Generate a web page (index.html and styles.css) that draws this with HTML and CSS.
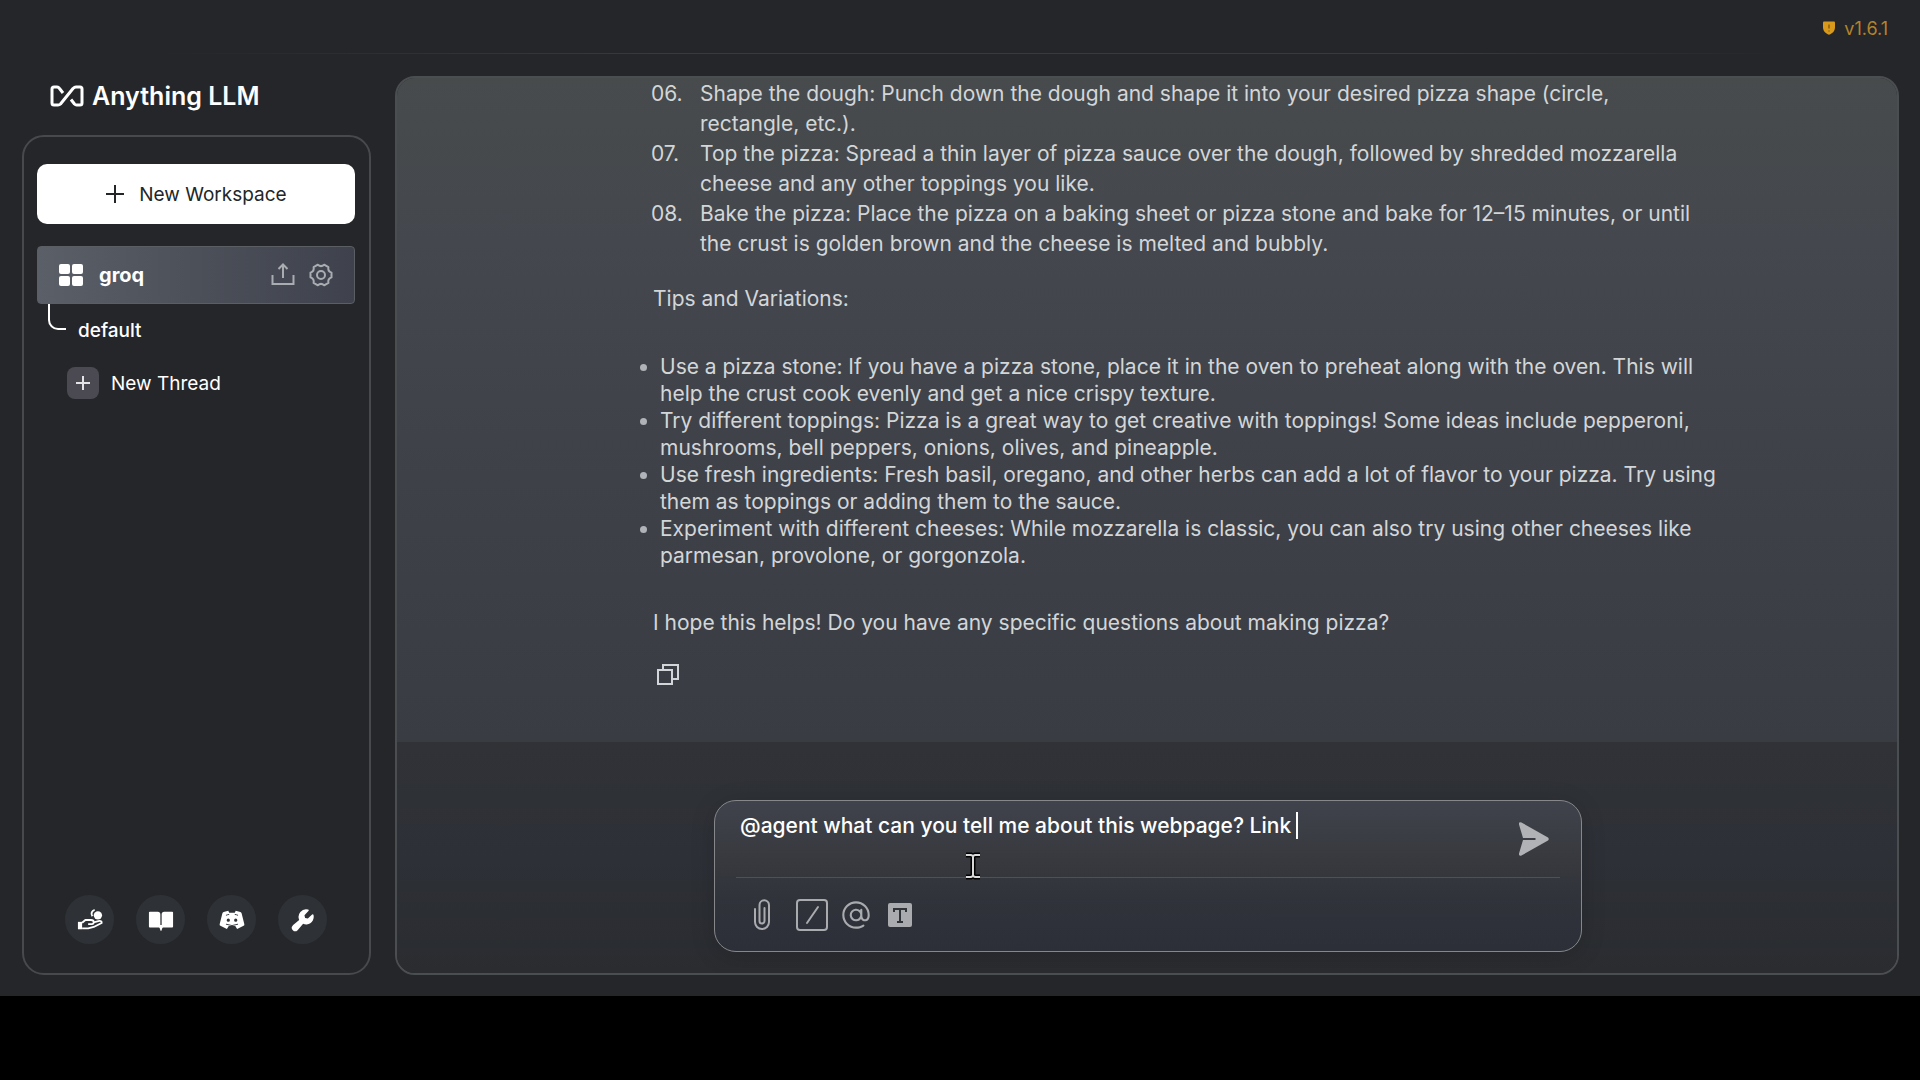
FILE: index.html
```html
<!DOCTYPE html>
<html lang="en">

<head>
    <meta charset="UTF-8">
    <meta name="viewport" content="width=device-width, initial-scale=1.0">
    <title>AnythingLLM</title>
    <link rel="stylesheet" href="styles.css">
</head>

<body>
    <div class="app">
        <header class="topbar">
            <a class="version" href="#">
                <svg class="version-icon" viewBox="0 0 14 14">
                    <path d="M1 1.500Q1 .5 2 .5H12Q13 .5 13 1.500V6C13 10 10.500 12.500 7 13.700C3.500 12.500 1 10 1 6Z" fill="#d99a1c" />
                    <path d="M7 3.500V7.500M7 9.500V10.500" stroke="#8a5c10" stroke-width="1.500" />
                </svg>
                v1.6.1
            </a>
        </header>

        <div class="layout">
            <aside class="sidebar">
                <a class="logo" href="#">
                    <svg class="logo-icon" viewBox="0 0 34 22" fill="none" stroke="#fff" stroke-width="3" stroke-linejoin="round">
                        <path d="M13 8L9.500 3.500Q8.500 2 7 2H4Q2 2 2 4V18Q2 20 4 20H8Q9.500 20 10.500 19L23 3.500Q24.500 2 26 2H30Q32 2 32 4V18Q32 20 30 20H26.500Q25.500 20 24.500 19L21 14.500" />
                    </svg>
                    Anything LLM
                </a>

                <div class="sidebar-panel">
                    <button class="new-workspace" type="button">
                        <svg class="icon-20" viewBox="0 0 20 20" stroke="#222628" stroke-width="2">
                            <path d="M10 1V19M1 10H19" />
                        </svg>
                        New Workspace
                    </button>

                    <div class="workspace">
                        <a class="workspace-name" href="#">
                            <svg class="icon-24" viewBox="0 0 24 24" fill="#fff">
                                <rect x="0" y="1" width="11" height="10" rx="2" />
                                <rect x="13" y="1" width="11" height="10" rx="2" />
                                <rect x="0" y="13" width="11" height="10" rx="2" />
                                <rect x="13" y="13" width="11" height="10" rx="2" />
                            </svg>
                            groq
                        </a>
                        <button class="icon-button" type="button" aria-label="Upload">
                            <svg class="icon-24" viewBox="0 0 24 24" fill="none" stroke="#a9acb1" stroke-width="2">
                                <path d="M1.500 12V21H22.500V12M12 15V2M7.500 6L12 1.500L16.500 6" />
                            </svg>
                        </button>
                        <button class="icon-button" type="button" aria-label="Settings">
                            <svg class="icon-24" viewBox="-12 -12 24 24" fill="none" stroke="#a9acb1" stroke-width="2" stroke-linejoin="round">
                                <path d="M10.500 2.400Q6.500 3.800 7.400 7.900L3.150 10.300Q0 7.500 -3.150 10.300L-7.400 7.900Q-6.500 3.800 -10.500 2.400V-2.400Q-6.500 -3.800 -7.400 -7.900L-3.150 -10.300Q0 -7.500 3.150 -10.300L7.400 -7.900Q6.500 -3.800 10.500 -2.400Z" />
                                <circle r="4" />
                            </svg>
                        </button>
                    </div>

                    <a class="thread" href="#">
                        <span class="thread-line"></span>
                        default
                    </a>
                    <button class="new-thread" type="button">
                        <span class="new-thread-icon">
                            <svg viewBox="0 0 16 16" stroke="#e4e4e6" stroke-width="2">
                                <path d="M8 1V15M1 8H15" />
                            </svg>
                        </span>
                        New Thread
                    </button>

                    <nav class="sidebar-footer">
                        <a class="round-link" href="#" aria-label="Support">
                            <svg viewBox="0 0 28 24">
                                <circle cx="22.500" cy="7" r="4.500" fill="#fff" />
                                <path d="M19 1A4.500 4.500 0 0 0 16.500 8" fill="none" stroke="#fff" stroke-width="2" />
                                <path d="M1 14H5.500V22H1Z" fill="#fff" />
                                <path d="M5.500 15L9 12H15Q18 12 18 14.500L24 13Q27 12.800 26.500 15.200L18 19.500L12 21H5.500M12 16.500H16Q18 16.500 18 14.500" fill="none" stroke="#fff" stroke-width="2" stroke-linejoin="round" />
                            </svg>
                        </a>
                        <a class="round-link" href="#" aria-label="Docs">
                            <svg viewBox="0 0 28 24" fill="#fff">
                                <path d="M2 3H10.500Q13.300 3 13.300 6V17.500H14.700V6Q14.700 3 17.500 3H26Q27 3 27 4V19Q27 20 26 20H16Q15.200 20.500 14.500 23.500H13.500Q12.800 20.500 12 20H2Q1 20 1 19V4Q1 3 2 3Z" />
                            </svg>
                        </a>
                        <a class="round-link" href="#" aria-label="Discord">
                            <svg viewBox="0 0 28 24" fill="#fff">
                                <path fill-rule="evenodd" d="M10 2L11 4.200H17L18 2L23 3.500Q24 4 24.400 5L27.300 16.500Q27.500 17.700 26.500 18.300L19.500 21.800L17.500 18.500H10.500L8.500 21.800L1.500 18.300Q.5 17.700 .7 16.500L3.600 5Q4 4 5 3.500ZM10 10.500A1.700 1.700 0 1 0 10 14A1.700 1.700 0 1 0 10 10.500ZM18 10.500A1.700 1.700 0 1 0 18 14A1.700 1.700 0 1 0 18 10.500Z" />
                                <path d="M7.500 7Q9 6.200 11 6M20.500 7Q19 6.200 17 6M7.500 16.500Q14 19.500 20.500 16.500" stroke="#2e3236" stroke-width="1" fill="none" />
                            </svg>
                        </a>
                        <a class="round-link" href="#" aria-label="Settings">
                            <svg viewBox="16 12 228 228" fill="#fff">
                                <path d="M232,96a72,72,0,0,1-100.940,66L79,222.220c-.12.14-.26.29-.39.42a32,32,0,0,1-45.260-45.260c.14-.13.28-.27.43-.39L94,124.940a72.070,72.070,0,0,1,83.540-98.780,8,8,0,0,1,3.930,13.190L144,80l5.660,26.350L176,112l40.650-37.520a8,8,0,0,1,13.190,3.930A72.600,72.600,0,0,1,232,96Z" />
                            </svg>
                        </a>
                    </nav>
                </div>
            </aside>

            <main class="chat">
                <div class="history">
                    <div class="message">
                        <ol class="steps">
                            <li><span class="step-number">06.</span><span>Shape the dough: Punch down the dough and shape it into your desired pizza shape (circle,<br>rectangle, etc.).</span></li>
                            <li><span class="step-number">07.</span><span>Top the pizza: Spread a thin layer of pizza sauce over the dough, followed by shredded mozzarella<br>cheese and any other toppings you like.</span></li>
                            <li><span class="step-number">08.</span><span>Bake the pizza: Place the pizza on a baking sheet or pizza stone and bake for 12–15 minutes, or until<br>the crust is golden brown and the cheese is melted and bubbly.</span></li>
                        </ol>
                        <p>Tips and Variations:</p>
                        <ul class="tips">
                            <li>Use a pizza stone: If you have a pizza stone, place it in the oven to preheat along with the oven. This will<br>help the crust cook evenly and get a nice crispy texture.</li>
                            <li>Try different toppings: Pizza is a great way to get creative with toppings! Some ideas include pepperoni,<br>mushrooms, bell peppers, onions, olives, and pineapple.</li>
                            <li>Use fresh ingredients: Fresh basil, oregano, and other herbs can add a lot of flavor to your pizza. Try using<br>them as toppings or adding them to the sauce.</li>
                            <li>Experiment with different cheeses: While mozzarella is classic, you can also try using other cheeses like<br>parmesan, provolone, or gorgonzola.</li>
                        </ul>
                        <p>I hope this helps! Do you have any specific questions about making pizza?</p>
                        <button class="copy" type="button" aria-label="Copy">
                            <svg viewBox="0 0 22 22" fill="none" stroke="#d3d6d8" stroke-width="2">
                                <path d="M1 6H15V20H1ZM6 6V1H21V15H15" />
                            </svg>
                        </button>
                    </div>
                </div>

                <div class="prompt-area">
                    <form class="prompt">
                        <div class="prompt-row">
                            <textarea class="prompt-input" rows="1" aria-label="Message">@agent what can you tell me about this webpage? Link</textarea>
                            <span class="caret"></span>
                            <svg class="pointer" viewBox="0 0 18 28" fill="none">
                                <path d="M2 3H7L9 4L11 3H16M9 4V24M2 25H7L9 24L11 25H16" stroke="#000" stroke-width="5" />
                                <path d="M2 3H7L9 4L11 3H16M9 4V24M2 25H7L9 24L11 25H16" stroke="#d8d8d8" stroke-width="2" />
                            </svg>
                            <button class="send" type="submit" aria-label="Send">
                                <svg viewBox="0 0 32 36" fill="#b0b2b5">
                                    <path d="M5 17H17.500V19H5L1 32.500Q.5 35.500 3.500 34.500L30 19.500Q31.500 18 30 16.500L3.500 1.500Q.5 .5 1 3.500Z" />
                                </svg>
                            </button>
                        </div>
                        <div class="prompt-tools">
                            <button class="tool" type="button" aria-label="Attach file">
                                <svg class="clip" viewBox="0 0 16 32" fill="none" stroke="#a9abae" stroke-width="2" stroke-linecap="round">
                                    <path d="M1 10V23A7 7 0 0 0 15 23V6A4.500 4.500 0 0 0 5.500 6V22A2.500 2.500 0 0 0 10.500 22V9" />
                                </svg>
                            </button>
                            <button class="tool" type="button" aria-label="Commands">
                                <svg class="slash" viewBox="0 0 32 32" fill="none" stroke="#a9abae" stroke-width="2">
                                    <rect x="1" y="1" width="30" height="30" rx="3" />
                                    <path d="M11 24L22 8" stroke-linecap="round" />
                                </svg>
                            </button>
                            <button class="tool" type="button" aria-label="Agents">
                                <svg class="at" viewBox="22 22 212 212" fill="#a9abae">
                                    <path d="M128,24a104,104,0,0,0,0,208c21.510,0,44.100-6.480,60.430-17.330a8,8,0,0,0-8.870-13.330C166,210.380,146.210,216,128,216a88,88,0,1,1,88-88c0,26.450-10.880,32-20,32s-20-5.550-20-32V88a8,8,0,0,0-16,0v4.260a48,48,0,1,0,5.930,65.100c6,12,16.350,18.640,30.070,18.640,22.540,0,36-17.940,36-48A104.110,104.110,0,0,0,128,24Zm0,136a32,32,0,1,1,32-32A32,32,0,0,1,128,160Z" />
                                </svg>
                            </button>
                            <button class="tool" type="button" aria-label="Text size">
                                <svg class="text-size" viewBox="0 0 24 24">
                                    <rect width="24" height="24" rx="2" fill="#a9abae" />
                                    <path d="M6 9V6H18V9M12 6V19M9 19H15" fill="none" stroke="#303338" stroke-width="2" />
                                </svg>
                            </button>
                        </div>
                    </form>
                </div>
            </main>
        </div>
    </div>
</body>

</html>
```
FILE: styles.css
```css
* {
    box-sizing: border-box;
}

body {
    margin: 0;
    min-height: 100vh;
    background: #000;
    color: #fff;
    font-family: Inter, "Liberation Sans", sans-serif;
    font-size: 20px;
}

a {
    color: inherit;
    text-decoration: none;
}

button {
    border: none;
    padding: 0;
    background: none;
    color: inherit;
    font: inherit;
}

svg {
    display: block;
}

.app {
    display: flex;
    flex-direction: column;
    height: calc(100vh - 84px);
    background: #25262a;
}

/* top bar */
.topbar {
    display: flex;
    justify-content: flex-end;
    height: 54px;
    padding: 16px 32px 0;
    background: linear-gradient(90deg, transparent 8%, #393a3d 35%, #393a3d 75%, transparent 93%) bottom / 100% 1px no-repeat;
}

.version {
    display: flex;
    align-items: center;
    gap: 8px;
    height: 24px;
    color: #b3842a;
    font-size: 18px;
}

.version-icon {
    width: 14px;
    height: 14px;
}

.layout {
    display: flex;
    flex: 1;
    gap: 24px;
    min-height: 0;
    padding: 22px 21px 21px 22px;
}

/* sidebar */
.sidebar {
    display: flex;
    flex-direction: column;
    flex: 0 0 349px;
}

.logo {
    display: flex;
    align-items: center;
    gap: 8px;
    height: 40px;
    margin-bottom: 19px;
    padding-left: 28px;
    font-size: 25px;
    font-weight: 600;
}

.logo-icon {
    width: 34px;
    height: 22px;
}

.sidebar-panel {
    display: flex;
    flex-direction: column;
    flex: 1;
    padding: 27px 14px 29px 13px;
    border: 2px solid #47494c;
    border-radius: 22px;
}

.icon-20 {
    width: 20px;
    height: 20px;
}

.icon-24 {
    width: 24px;
    height: 24px;
}

.new-workspace {
    display: flex;
    align-items: center;
    justify-content: center;
    gap: 14px;
    height: 60px;
    border-radius: 10px;
    background: #fff;
    color: #222628;
    font-size: 19px;
}

.workspace {
    display: flex;
    align-items: center;
    gap: 14px;
    height: 58px;
    margin-top: 22px;
    padding: 0 21px;
    border: 1px solid #5b5e63;
    border-radius: 4px;
    background: linear-gradient(90deg, #5a5f68, #4c5059 50%, #3f424d);
}

.workspace-name {
    display: flex;
    align-items: center;
    flex: 1;
    gap: 16px;
    font-weight: 700;
}

.thread {
    display: flex;
    align-items: center;
    gap: 12px;
    height: 52px;
    padding-left: 11px;
    font-size: 19px;
    font-weight: 500;
}

.thread-line {
    width: 18px;
    height: 26px;
    align-self: flex-start;
    border-bottom: 2px solid #fff;
    border-left: 2px solid #fff;
    border-bottom-left-radius: 10px;
}

.new-thread {
    display: flex;
    align-items: center;
    gap: 12px;
    height: 54px;
    padding-left: 30px;
    font-size: 19px;
}

.new-thread-icon {
    display: flex;
    align-items: center;
    justify-content: center;
    width: 32px;
    height: 32px;
    border-radius: 8px;
    background: #4b4a52;
}

.new-thread-icon svg {
    width: 16px;
    height: 16px;
}

.sidebar-footer {
    display: flex;
    justify-content: center;
    gap: 22px;
    margin-top: auto;
}

.round-link {
    display: flex;
    align-items: center;
    justify-content: center;
    width: 49px;
    height: 49px;
    border-radius: 50%;
    background: #2e3236;
}

.round-link svg {
    width: 26px;
    height: 24px;
}

/* chat */
.chat {
    display: flex;
    flex-direction: column;
    flex: 1;
    min-width: 0;
    border: 2px solid #4b4e51;
    border-radius: 20px;
    overflow: hidden;
}

.history {
    flex: 1;
    min-height: 0;
    padding: 1px 0 0 254px;
    background: linear-gradient(#484b4c, #44474d 25%, #3f4148 60%, #3a3c44);
    overflow: hidden;
    color: #d3d6d8;
    font-size: 21px;
}

.message p {
    margin: 0;
    padding-left: 2px;
    line-height: 28px;
}

.steps {
    margin: 0 0 26px;
    padding: 0;
    line-height: 30px;
    list-style: none;
}

.steps li {
    display: flex;
}

.step-number {
    flex: 0 0 49px;
}

.tips {
    margin: 40px 0;
    padding-left: 9px;
    line-height: 27px;
}

.tips li::marker {
    color: #b0b3b8;
}

.copy {
    margin: 27px 0 0 6px;
}

.copy svg {
    width: 22px;
    height: 22px;
}

.prompt-area {
    display: flex;
    justify-content: center;
    padding: 58px 22px 21px 24px;
    background: linear-gradient(#303236, #2d3036 50%, #2a2c30);
}

.prompt {
    flex: 0 1 868px;
    padding: 0 21px;
    border: 1px solid #85878b;
    border-radius: 22px;
    background: linear-gradient(#40434c, #37393e 40%, #30333a 65%, #2c2f38);
    box-shadow: 0 4px 24px rgba(0, 0, 0, 0.15);
}

.prompt-row {
    position: relative;
    display: flex;
    align-items: flex-start;
    justify-content: space-between;
    height: 77px;
    padding: 9px 10px 0 4px;
    border-bottom: 1px solid #4e5155;
}

.prompt-input {
    flex: 1;
    height: 32px;
    padding: 0;
    border: none;
    outline: none;
    background: none;
    color: #fff;
    font: inherit;
    font-size: 21px;
    font-weight: 500;
    line-height: 32px;
    resize: none;
    overflow: hidden;
}

.caret {
    position: absolute;
    top: 11px;
    left: 560px;
    width: 2px;
    height: 27px;
    background: #fff;
}

.pointer {
    position: absolute;
    top: 51px;
    left: 228px;
    width: 18px;
    height: 28px;
}

.send {
    padding-top: 11px;
}

.send svg {
    width: 32px;
    height: 36px;
}

.prompt-tools {
    display: flex;
    align-items: center;
    gap: 14px;
    height: 73px;
    padding: 0 18px;
}

.clip {
    width: 16px;
    height: 32px;
    margin-right: 12px;
}

.slash {
    width: 32px;
    height: 32px;
}

.at {
    width: 28px;
    height: 28px;
}

.text-size {
    width: 24px;
    height: 24px;
    margin-left: 4px;
}
```
